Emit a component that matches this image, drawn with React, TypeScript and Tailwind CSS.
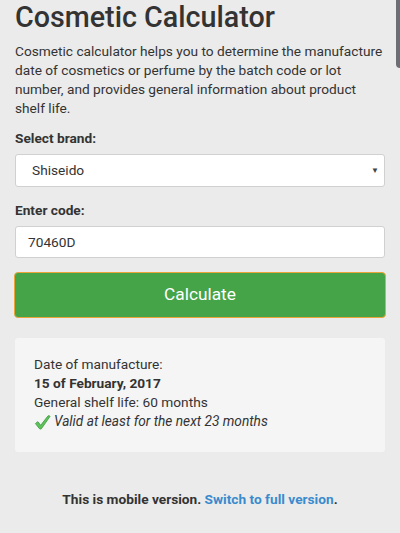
export default function App() {
  return (
    <div className="relative min-h-[533px] bg-[#ebebeb] text-[#333] font-['Roboto','Liberation_Sans',sans-serif] overflow-hidden">
      {/* scrollbar thumb */}
      <div className="absolute right-0 top-0 h-[68px] w-[4px] rounded-bl-sm bg-[#6d6d74]" />

      <div className="px-[15px]">
        <h1 className="text-[28.7px] leading-[34px] font-medium">Cosmetic Calculator</h1>
        <p className="mt-[8px] text-[13.7px] leading-[19px]">
          Cosmetic calculator helps you to determine the manufacture date of cosmetics or perfume by the batch code or lot
          number, and provides general information about product shelf life.
        </p>

        <label className="block mt-[11px] text-[13.7px] leading-[19px] font-bold">Select brand:</label>
        <div className="relative mt-[6px] h-[33px] rounded-[3px] border border-[#d0d0d0] bg-white flex items-center pl-[16px]">
          <span className="text-[13.7px]">Shiseido</span>
          <span className="absolute right-[5px] top-[12px] text-[8px] leading-none text-[#444]">▼</span>
        </div>

        <label className="block mt-[14px] text-[13.7px] leading-[19px] font-bold">Enter code:</label>
        <div className="mt-[6px] h-[32px] rounded-[3px] border border-[#d0d0d0] bg-white flex items-center pl-[12px]">
          <span className="text-[13.7px]">70460D</span>
        </div>

        <button className="mt-[14px] -mx-px w-[calc(100%+2px)] h-[46px] rounded-[4px] border border-[#eaa43a] bg-[#45a447] text-white text-[17.3px] flex items-center justify-center">
          Calculate
        </button>

        <div className="mt-[20px] rounded-[3px] bg-[#f5f5f5] px-[19px] pt-[17px] pb-[21px] text-[13.7px] leading-[19px]">
          <div>Date of manufacture:</div>
          <div className="font-bold">15 of February, 2017</div>
          <div>General shelf life: 60 months</div>
          <div className="flex items-center gap-[3px] italic">
            <svg width="17" height="16" viewBox="0 0 20 19" className="shrink-0">
              <path
                d="M1.6 11.4 Q3 9.6 4.6 9.2 L7.8 13.4 L16.6 2.2 Q18 1.6 19 2.8 L8.6 17.6 Q7.4 18.4 6.4 17.4 Z"
                fill="#5cc35a"
                stroke="#3f9d40"
                strokeWidth="1"
                strokeLinejoin="round"
              />
            </svg>
            <span>Valid at least for the next 23 months</span>
          </div>
        </div>

        <p className="mt-[38px] text-center text-[13.7px] leading-[19px] font-bold">
          This is mobile version. <a className="text-[#3a8bcd]">Switch to full version</a>.
        </p>
      </div>
    </div>
  );
}
